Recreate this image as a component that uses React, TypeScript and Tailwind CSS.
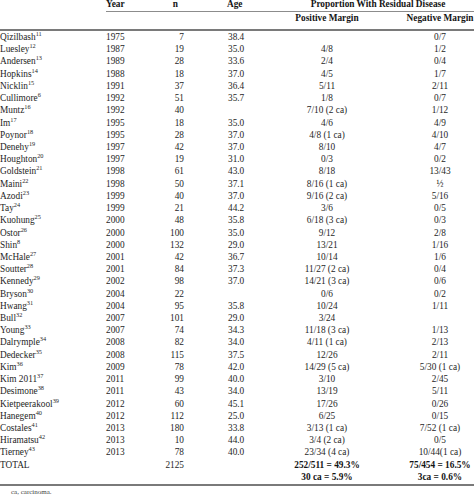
type Row = {
  author: string;
  sup?: string;
  year?: string;
  n?: string;
  age?: string;
  pos?: string;
  neg?: string;
  bold?: boolean;
};

const rows: Row[] = [
  { author: 'Qizilbash', sup: '11', year: '1975', n: '7', age: '38.4', pos: '', neg: '0/7' },
  { author: 'Luesley', sup: '12', year: '1987', n: '19', age: '35.0', pos: '4/8', neg: '1/2' },
  { author: 'Andersen', sup: '13', year: '1989', n: '28', age: '33.6', pos: '2/4', neg: '0/4' },
  { author: 'Hopkins', sup: '14', year: '1988', n: '18', age: '37.0', pos: '4/5', neg: '1/7' },
  { author: 'Nicklin', sup: '15', year: '1991', n: '37', age: '36.4', pos: '5/11', neg: '2/11' },
  { author: 'Cullimore', sup: '6', year: '1992', n: '51', age: '35.7', pos: '1/8', neg: '0/7' },
  { author: 'Muntz', sup: '16', year: '1992', n: '40', age: '', pos: '7/10 (2 ca)', neg: '1/12' },
  { author: 'Im', sup: '17', year: '1995', n: '18', age: '35.0', pos: '4/6', neg: '4/9' },
  { author: 'Poynor', sup: '18', year: '1995', n: '28', age: '37.0', pos: '4/8 (1 ca)', neg: '4/10' },
  { author: 'Denehy', sup: '19', year: '1997', n: '42', age: '37.0', pos: '8/10', neg: '4/7' },
  { author: 'Houghton', sup: '20', year: '1997', n: '19', age: '31.0', pos: '0/3', neg: '0/2' },
  { author: 'Goldstein', sup: '21', year: '1998', n: '61', age: '43.0', pos: '8/18', neg: '13/43' },
  { author: 'Maini', sup: '22', year: '1998', n: '50', age: '37.1', pos: '8/16 (1 ca)', neg: '½' },
  { author: 'Azodi', sup: '23', year: '1999', n: '40', age: '37.0', pos: '9/16 (2 ca)', neg: '5/16' },
  { author: 'Tay', sup: '24', year: '1999', n: '21', age: '44.2', pos: '3/6', neg: '0/5' },
  { author: 'Kuohung', sup: '25', year: '2000', n: '48', age: '35.8', pos: '6/18 (3 ca)', neg: '0/3' },
  { author: 'Ostor', sup: '26', year: '2000', n: '100', age: '35.0', pos: '9/12', neg: '2/8' },
  { author: 'Shin', sup: '8', year: '2000', n: '132', age: '29.0', pos: '13/21', neg: '1/16' },
  { author: 'McHale', sup: '27', year: '2001', n: '42', age: '36.7', pos: '10/14', neg: '1/6' },
  { author: 'Soutter', sup: '28', year: '2001', n: '84', age: '37.3', pos: '11/27 (2 ca)', neg: '0/4' },
  { author: 'Kennedy', sup: '29', year: '2002', n: '98', age: '37.0', pos: '14/21 (3 ca)', neg: '0/6' },
  { author: 'Bryson', sup: '30', year: '2004', n: '22', age: '', pos: '0/6', neg: '0/2' },
  { author: 'Hwang', sup: '31', year: '2004', n: '95', age: '35.8', pos: '10/24', neg: '1/11' },
  { author: 'Bull', sup: '32', year: '2007', n: '101', age: '29.0', pos: '3/24', neg: '' },
  { author: 'Young', sup: '33', year: '2007', n: '74', age: '34.3', pos: '11/18 (3 ca)', neg: '1/13' },
  { author: 'Dalrymple', sup: '34', year: '2008', n: '82', age: '34.0', pos: '4/11 (1 ca)', neg: '2/13' },
  { author: 'Dedecker', sup: '35', year: '2008', n: '115', age: '37.5', pos: '12/26', neg: '2/11' },
  { author: 'Kim', sup: '36', year: '2009', n: '78', age: '42.0', pos: '14/29 (5 ca)', neg: '5/30 (1 ca)' },
  { author: 'Kim 2011', sup: '37', year: '2011', n: '99', age: '40.0', pos: '3/10', neg: '2/45' },
  { author: 'Desimone', sup: '38', year: '2011', n: '43', age: '34.0', pos: '13/19', neg: '5/11' },
  { author: 'Kietpeerakool', sup: '39', year: '2012', n: '60', age: '45.1', pos: '17/26', neg: '0/26' },
  { author: 'Hanegem', sup: '40', year: '2012', n: '112', age: '25.0', pos: '6/25', neg: '0/15' },
  { author: 'Costales', sup: '41', year: '2013', n: '180', age: '33.8', pos: '3/13 (1 ca)', neg: '7/52 (1 ca)' },
  { author: 'Hiramatsu', sup: '42', year: '2013', n: '10', age: '44.0', pos: '3/4 (2 ca)', neg: '0/5' },
  { author: 'Tierney', sup: '43', year: '2013', n: '78', age: '40.0', pos: '23/34 (4 ca)', neg: '10/44(1 ca)' },
  { author: 'TOTAL', year: '', n: '2125', age: '', pos: '252/511 = 49.3%', neg: '75/454 = 16.5%', bold: true },
  { author: '', year: '', n: '', age: '', pos: '30 ca = 5.9%', neg: '3ca = 0.6%', bold: true },
];

// author | year | n | age | positive | negative
const cols = 'grid grid-cols-[106px_44px_34px_86px_114px_112px]';

const App = () => {
  return (
    <div className="w-[474px] h-[497px] overflow-hidden bg-white text-[#1e1e1e] font-['Liberation_Serif','Times_New_Roman',serif] text-[9.3px]">
      <div className="w-[496px] -mt-[2px]">
        {/* header, first line */}
        <div className={`${cols} h-[14px] leading-[12px] font-bold text-[#141414]`}>
          <div />
          <div className="border-b border-[#8c8c8c]">Year</div>
          <div className="border-b border-[#8c8c8c] text-right pr-[6px]">n</div>
          <div className="border-b border-[#8c8c8c] pl-[43px]">Age</div>
          <div className="col-span-2 border-b border-[#8c8c8c] text-center pr-[10px]">
            Proportion With Residual Disease
          </div>
        </div>

        {/* header, second line */}
        <div className={`${cols} h-[19px] leading-[13px] font-bold text-[#141414] border-b-2 border-[#7a7a7a]`}>
          <div className="col-span-4" />
          <div className="text-center">Positive Margin</div>
          <div className="text-center">Negative Margin</div>
        </div>

        {/* body */}
        {rows.map((r, i) => (
          <div key={i} className={`${cols} h-[12.23px] leading-[12.23px] whitespace-nowrap`}>
            <div>
              {r.author}
              {r.sup && <sup className="text-[6.3px] top-[-4px]">{r.sup}</sup>}
            </div>
            <div>{r.year}</div>
            <div className="text-right">{r.n}</div>
            <div className="pl-[44px]">{r.age}</div>
            <div className={`text-center ${r.bold ? 'font-bold text-[#141414]' : ''}`}>{r.pos}</div>
            <div className={`text-center ${r.bold ? 'font-bold text-[#141414]' : ''}`}>{r.neg}</div>
          </div>
        ))}

        <div className="border-t-2 border-[#7a7a7a] mt-[0.5px] pl-[11px] pt-[2px] text-[7px] leading-[9px] text-[#444]">
          ca, carcinoma.
        </div>
      </div>
    </div>
  );
};

export default App;
